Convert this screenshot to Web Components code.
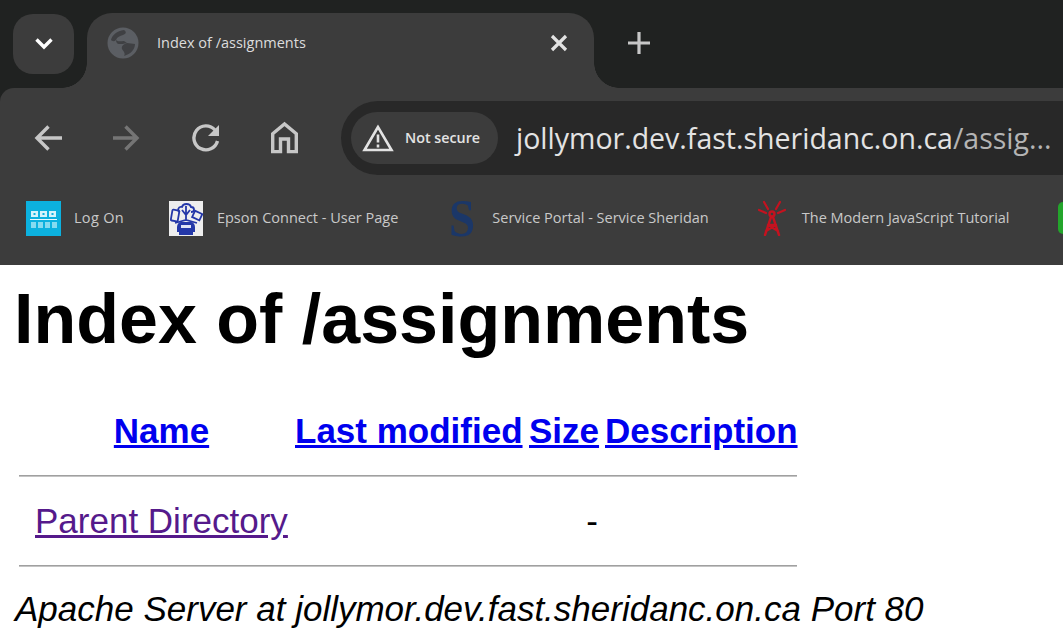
<!DOCTYPE html>
<html lang="en"><head><meta charset="utf-8"><title>Index of /assignments</title>
<style>html,body{margin:0;padding:0;background:#fff;overflow:hidden}body{width:1063px;height:632px}</style>
</head><body>
<browser-chrome>
  <tab-strip title-text="Index of /assignments"></tab-strip>
  <nav-toolbar></nav-toolbar>
  <bookmark-bar>
    <book-mark label="Log On" style="letter-spacing:.3px">
      <svg slot="icon" width="35" height="35" viewBox="0 0 35 35"><defs><filter id="b1" x="-10%" y="-10%" width="120%" height="120%"><feGaussianBlur stdDeviation=".7"/></filter></defs><rect width="35" height="35" fill="#0cb1df"/><g filter="url(#b1)"><g fill="#d5f3fb"><rect x="5" y="10" width="7" height="6"/><rect x="14" y="10" width="7" height="6"/><rect x="23" y="10" width="7" height="6"/></g><rect x="4" y="18" width="27" height="1" fill="#e9f9fd"/><g fill="#86dbf0"><rect x="5" y="21" width="5" height="6"/><rect x="12" y="21" width="5" height="6"/><rect x="19" y="21" width="5" height="6"/><rect x="26" y="21" width="5" height="6"/></g><g fill="#0cb1df"><rect x="7.500" y="12" width="2" height="2"/><rect x="16.500" y="12" width="2" height="2"/><rect x="25.500" y="12" width="2" height="2"/></g></g></svg>
    </book-mark>
    <book-mark label="Epson Connect - User Page" style="margin-right:1px">
      <svg slot="icon" width="35" height="35" viewBox="0 0 35 35"><rect width="34" height="35" fill="#eeeeee"/><g fill="none" stroke="#2437a8" stroke-width="1.800"><path d="M11 11c-3-1-2-6 2-5 1-4 8-4 9 0 4 0 4 5 0 5"/><path d="M17 5v15M13 9l4 5 4-5M6 22l11-3 11 3"/><rect x="2.500" y="9" width="7" height="11" rx="1" transform="rotate(10 6 15)"/><rect x="24" y="11" width="8" height="7" transform="rotate(25 28 15)"/></g><path d="M8 31v-5c0-3 2-5 4-5h10c2 0 4 2 4 5v5z" fill="#2438a8"/><rect x="12" y="24" width="10" height="3" fill="#dfe3f5"/><rect x="10" y="31" width="14" height="3" fill="#2438a8"/></svg>
    </book-mark>
    <book-mark label="Service Portal - Service Sheridan">
      <span slot="icon" style="display:block;margin-left:5px;width:26px;height:35px;font:700 52px/35px 'Liberation Serif',serif;color:#1b3768;transform:scaleX(.9);transform-origin:0 50%">S</span>
    </book-mark>
    <book-mark label="The Modern JavaScript Tutorial">
      <svg slot="icon" style="margin-left:3px" width="32" height="36" viewBox="0 0 32 36"><g fill="none" stroke="#c4121f" stroke-linecap="round"><g stroke-width="2.400"><circle cx="15" cy="14" r="2.500"/><path d="M14 17L8 35M16 17l6 18M11 25h8M9 31l10-6M21 31l-10-6"/></g><g stroke-width="2.200"><path d="M11 9L7 2M19 9l4-7M9 13L2 10M21 13l7-3"/></g></g></svg>
    </book-mark>
    <span style="width:20px;height:32px;background:#23a52b;border-radius:5px;margin-left:3px;flex:none;display:block"></span>
  </bookmark-bar>
</browser-chrome>
<index-page>
  <h1 slot="title">Index of /assignments</h1>
  <address slot="footer">Apache Server at jollymor.dev.fast.sheridanc.on.ca Port 80</address>
</index-page>
<script>
function def(name, html){
  customElements.define(name, class extends HTMLElement{
    constructor(){super();const r=this.attachShadow({mode:'open'});r.innerHTML=typeof html==='function'?html(this):html;}
  });
}
const UI="'Open Sans','Noto Sans',sans-serif";
def('browser-chrome',`<style>:host{display:block;background:#202221;height:265px}</style><slot></slot>`);
def('tab-strip',el=>`<style>
:host{display:flex;height:88px;background:#202221;font-family:${UI}}
.left{width:87px;flex:none;padding:14px 0 0 13px;box-sizing:border-box}
.menu{width:61px;height:60px;border-radius:20px;background:#3c3c3c;display:flex;align-items:center;justify-content:center}
.tab{position:relative;width:507px;flex:none;margin-top:13px;background:#3c3c3c;border-radius:25px 25px 0 0;display:flex;align-items:center;height:75px;padding:0 25px 15px 20px;box-sizing:border-box}
.tab::before,.tab::after{content:"";position:absolute;bottom:0;width:25px;height:25px}
.tab::before{left:-25px;background:radial-gradient(circle at 0 0,transparent 24.5px,#3c3c3c 25px)}
.tab::after{right:-25px;background:radial-gradient(circle at 100% 0,transparent 24.5px,#3c3c3c 25px)}
.title{flex:1;margin:-2px 0 0 18px;font-size:14.500px;color:#dcdcdc;white-space:nowrap}
.plus{margin:-1px 0 0 33px;height:88px;display:flex;align-items:center}
</style>
<div class="left"><div class="menu"><svg width="20" height="14" viewBox="0 0 20 14"><path d="M2.500 2.500l7.500 7.500 7.500-7.500" fill="none" stroke="#fff" stroke-width="3.400"/></svg></div></div>
<div class="tab">
<svg width="32" height="32" viewBox="0 0 32 32"><circle cx="16" cy="16" r="15.500" fill="#5b5e63"/><g fill="#3f4043"><path d="M4 13C5 8 10 4 17 3c3 2 2 4-1 5-3 1-6 2-7 5-2 2-4 1-5 0z"/><path d="M20 16l8 1c0 5-4 10-11 12 2-3-1-5-2-7-1-3 2-5 5-6z"/><path d="M9 13c2 2 5 1 8 1l3 2c-3 1-6 1-8 1-2 0-3-2-3-4z"/></g></svg>
<span class="title">${el.getAttribute('title-text')}</span>
<svg width="20" height="20" viewBox="0 0 20 20"><path d="M3 3l14 14M17 3L3 17" stroke="#e3e3e3" stroke-width="3.200" fill="none"/></svg>
</div>
<div class="plus"><svg width="24" height="24" viewBox="0 0 24 24"><path d="M12 1v22M1 12h22" stroke="#c7c7c7" stroke-width="3.200" fill="none"/></svg></div>`);
def('nav-toolbar',`<style>
:host{display:flex;align-items:center;height:99px;background:#3c3c3c;border-top-left-radius:14px;font-family:${UI};padding-left:33px;box-sizing:border-box;overflow:hidden}
svg{flex:none;display:block}
.nav{display:flex;align-items:center;width:308px;flex:none}
.omni{flex:1;height:74px;background:#282828;border-radius:37px 0 0 37px;display:flex;align-items:center;padding-left:10px;min-width:0;white-space:nowrap}
.pill{width:147px;height:52px;flex:none;border-radius:26px;background:#3c3c3c;display:flex;align-items:center;padding-left:11px;box-sizing:border-box;gap:11px;color:#e3e3e3;font-size:14.300px;font-weight:600}
.url{margin-left:18px;font-size:28.500px;color:#e3e3e3}
.url span{color:#b4b4b4}
</style>
<div class="nav">
<svg width="30" height="28" viewBox="0 0 30 28"><path d="M29 14H5M15.500 2.500L4 14l11.500 11.500" fill="none" stroke="#c7c7c7" stroke-width="3.400"/></svg>
<svg width="30" height="28" viewBox="0 0 30 28" style="margin-left:49px"><path d="M1 14h23M13.500 2.500L25 14 13.500 25.500" fill="none" stroke="#757575" stroke-width="3.400"/></svg>
<svg width="30" height="30" viewBox="0 0 30 30" style="margin-left:50px"><path d="M25.500 18a12 12 0 1 1-2.500-11" fill="none" stroke="#c7c7c7" stroke-width="3.400"/><path d="M27 2v11H16z" fill="#c7c7c7"/></svg>
<svg width="30" height="33" viewBox="0 0 30 33" style="margin-left:49px"><path d="M1.700 30.600V12.800L13.500 3l11.800 9.800v17.800H17.500V18h-8v12.600z" fill="none" stroke="#c7c7c7" stroke-width="3.400"/></svg>
</div>
<div class="omni"><div class="pill">
<svg width="32" height="28" viewBox="0 0 32 28"><path d="M16 3L2.500 26h27z" fill="none" stroke="#e3e3e3" stroke-width="2.600"/><path d="M16 10.500v8M16 20.500v3" stroke="#e3e3e3" stroke-width="2.600"/></svg>
<span>Not secure</span></div><div class="url">jollymor.dev.fast.sheridanc.on.ca<span>/assig...</span></div></div>`);
def('bookmark-bar',`<style>:host{display:flex;align-items:center;height:78px;background:#3c3c3c;padding:0 0 16px 26px;box-sizing:border-box;gap:45px;overflow:hidden;width:1063px}</style><slot></slot>`);
def('book-mark',el=>`<style>:host{display:flex;align-items:center;flex:none;gap:13px;font:14.500px ${UI};color:#c9c9c9;white-space:nowrap}.i{width:35px;height:35px;display:flex;align-items:center;flex:none}.l{margin-top:-1px}</style><span class="i"><slot name="icon"></slot></span><span class="l">${el.getAttribute('label')}</span>`);
def('index-page',`<style>
:host{display:block;padding:14px 0 0 14px;font:35px/40px 'Liberation Sans',Arial,sans-serif;color:#000}
::slotted(h1){font:700 70px/80px 'Liberation Sans',Arial,sans-serif;margin:0 0 52px}
::slotted(address){font:italic 35px/40px 'Liberation Sans',Arial,sans-serif;margin:-2px 0 0 1px}
.t{margin-left:5px;width:778px}
.row{display:grid;grid-template-columns:9px 253px 227px 69px 191px;column-gap:7px;height:40px;align-items:center}
.row>*{white-space:nowrap}
.hd{font-weight:700;text-align:center}
a{color:#00e;text-decoration:underline}
a.v{color:#551a8b}
.hr{height:1px;background:#a0a0a0;margin:24px 0;border-bottom:1px solid #c4c4c4;box-sizing:content-box}
.dash{text-align:right}
</style>
<slot name="title"></slot>
<div class="t">
<div class="row hd"><span></span><a href="#n">Name</a><a href="#m">Last modified</a><a href="#s">Size</a><a href="#d">Description</a></div>
<div class="hr"></div>
<div class="row"><span></span><a href="#p" class="v">Parent Directory</a><span></span><span class="dash">-</span><span></span></div>
<div class="hr"></div>
</div>
<slot name="footer"></slot>`);
</script>
</body></html>
